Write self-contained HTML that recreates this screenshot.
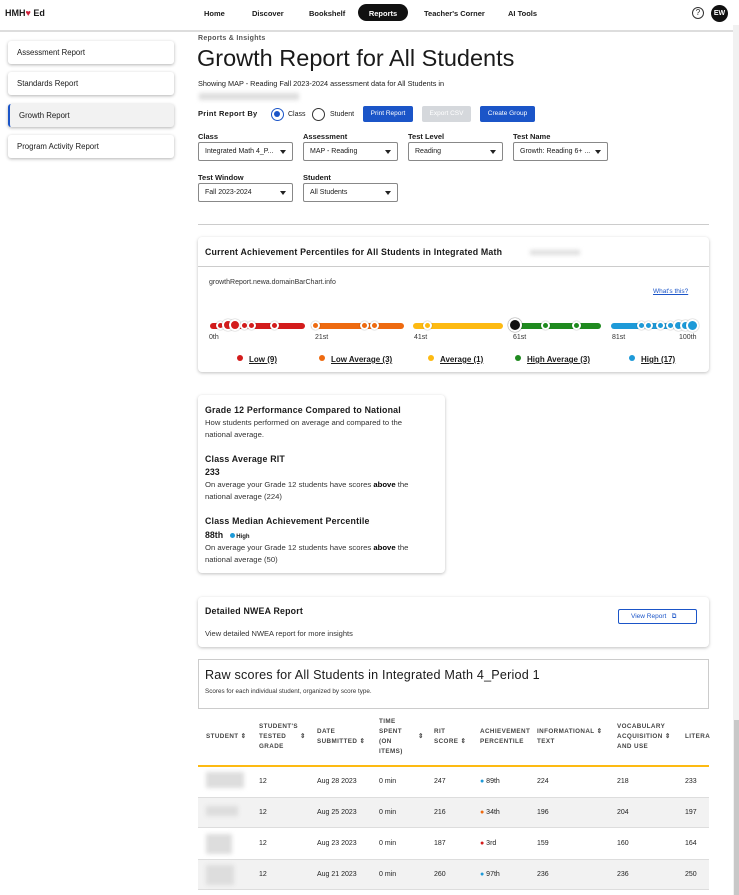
<!DOCTYPE html>
<html><head><meta charset="utf-8"><style>
*{box-sizing:border-box;margin:0;padding:0}
body{width:739px;height:895px;overflow:hidden;background:#fff;font-family:"Liberation Sans",sans-serif;color:#1a1a1a;position:relative}
.a{position:absolute;white-space:nowrap}
.nav{font-size:7.5px;font-weight:bold}
.card{position:absolute;background:#fff;border-radius:4px;box-shadow:0 1px 3px rgba(0,0,0,.25)}
.side{position:absolute;left:8px;width:166px;height:23px;background:#fff;border-radius:3px;box-shadow:0 1px 3px rgba(0,0,0,.3);font-size:7.8px;padding:7px 0 0 9px}
.lbl{font-size:7.5px;font-weight:bold}
.sel{position:absolute;height:19px;width:95px;border:1px solid #888;border-radius:2px;font-size:7px;padding:5px 0 0 6px;background:#fff}
.sel:after{content:"";position:absolute;right:6px;top:7px;border:3.5px solid transparent;border-top:4px solid #222}
.btn{position:absolute;top:106px;height:16px;font-size:6.5px;color:#fff;background:#1b55c8;border-radius:2px;text-align:center;padding-top:4px}
.bar{position:absolute;top:323px;height:6px;border-radius:3px}
.dot{position:absolute;width:9px;height:9px;border-radius:50%;border:2px solid #fff;box-shadow:0 0 1px rgba(0,0,0,.5)}
.tick{position:absolute;top:334px;font-size:7px;color:#333}
.leg{position:absolute;top:355px;font-size:8px;font-weight:bold;text-decoration:underline}
.leg i{display:inline-block;width:6px;height:6px;border-radius:50%;margin-right:6px;vertical-align:1px}
.th{position:absolute;font-size:6.3px;font-weight:bold;letter-spacing:.4px;color:#444;line-height:10px}
.td{position:absolute;font-size:7px;color:#222}
.blur{position:absolute;background:#ddd;filter:blur(2px)}
.pt{font-size:7.7px;line-height:12px;color:#333}
</style></head><body>
<div class="a" style="left:5px;top:8px;font-size:9px;font-weight:bold">HMH<span style="color:#d0203a">♥</span> Ed</div>
<div class="a nav" style="left:204px;top:9px">Home</div>
<div class="a nav" style="left:252px;top:9px">Discover</div>
<div class="a nav" style="left:309px;top:9px">Bookshelf</div>
<div class="a nav" style="left:358px;top:4px;width:50px;height:17px;background:#111;color:#fff;border-radius:9px;text-align:center;padding-top:5px">Reports</div>
<div class="a nav" style="left:424px;top:9px">Teacher's Corner</div>
<div class="a nav" style="left:508px;top:9px">AI Tools</div>
<div class="a" style="left:692px;top:7px;width:12px;height:12px;border:1px solid #333;border-radius:50%;font-size:8px;text-align:center;line-height:10px">?</div>
<div class="a" style="left:711px;top:5px;width:17px;height:17px;background:#111;color:#fff;border-radius:50%;font-size:7px;font-weight:bold;text-align:center;line-height:17px">EW</div>
<div class="a" style="left:0;top:30px;width:733px;height:2px;background:#ddd"></div>
<div class="a" style="left:733px;top:25px;width:6px;height:870px;background:#f1f1f1"></div>
<div class="a" style="left:734px;top:720px;width:5px;height:175px;background:#c8c8c8"></div>

<div class="side" style="top:41px">Assessment Report</div>
<div class="side" style="top:72px">Standards Report</div>
<div class="side" style="top:104px;background:#f2f2f2;border-left:2px solid #1b55c8">Growth Report</div>
<div class="side" style="top:135px">Program Activity Report</div>

<div class="a" style="left:198px;top:35px;font-size:7px;font-weight:bold;color:#555;letter-spacing:.3px">Reports &amp; Insights</div>
<div class="a" style="left:197px;top:45px;font-size:23.5px">Growth Report for All Students</div>
<div class="a" style="left:198px;top:79px;font-size:7.3px">Showing MAP - Reading Fall 2023-2024 assessment data for All Students in</div>
<div class="blur" style="left:199px;top:93px;width:100px;height:7px"></div>
<div class="a lbl" style="left:198px;top:109px;letter-spacing:.3px">Print Report By</div>
<div class="a" style="left:271px;top:108px;width:13px;height:13px;border:1.5px solid #1b55c8;border-radius:50%"><div style="margin:2px;width:6px;height:6px;border-radius:50%;background:#1b55c8"></div></div>
<div class="a" style="left:288px;top:111px;font-size:7px">Class</div>
<div class="a" style="left:312px;top:108px;width:13px;height:13px;border:1.5px solid #333;border-radius:50%"></div>
<div class="a" style="left:330px;top:111px;font-size:7px">Student</div>
<div class="btn" style="left:363px;width:50px">Print Report</div>
<div class="btn" style="left:422px;width:49px;background:#d5d8dc">Export CSV</div>
<div class="btn" style="left:480px;width:55px">Create Group</div>

<div class="a lbl" style="left:198px;top:132px">Class</div>
<div class="a lbl" style="left:303px;top:132px">Assessment</div>
<div class="a lbl" style="left:408px;top:132px">Test Level</div>
<div class="a lbl" style="left:513px;top:132px">Test Name</div>
<div class="sel" style="left:198px;top:142px">Integrated Math 4_P...</div>
<div class="sel" style="left:303px;top:142px">MAP - Reading</div>
<div class="sel" style="left:408px;top:142px">Reading</div>
<div class="sel" style="left:513px;top:142px">Growth: Reading 6+ ...</div>
<div class="a lbl" style="left:198px;top:173px">Test Window</div>
<div class="a lbl" style="left:303px;top:173px">Student</div>
<div class="sel" style="left:198px;top:183px">Fall 2023-2024</div>
<div class="sel" style="left:303px;top:183px">All Students</div>
<div class="a" style="left:198px;top:224px;width:511px;height:1px;background:#ccc"></div>

<div class="card" style="left:198px;top:237px;width:511px;height:135px"></div>
<div class="a" style="left:198px;top:266px;width:511px;height:1px;background:#ccc"></div>
<div class="a" style="left:205px;top:247px;font-size:8.8px;font-weight:bold;letter-spacing:.2px">Current Achievement Percentiles for All Students in Integrated Math</div>
<div class="blur" style="left:530px;top:250px;width:50px;height:5px"></div>
<div class="a" style="left:209px;top:279px;font-size:7px;color:#333">growthReport.newa.domainBarChart.info</div>
<div class="a" style="left:653px;top:288px;font-size:6.5px;color:#1b55c8;text-decoration:underline">What's this?</div>
<div class="bar" style="left:210px;width:95px;background:#d31c1c"></div>
<div class="bar" style="left:311px;width:93px;background:#ee6a10"></div>
<div class="bar" style="left:413px;width:90px;background:#fdba12"></div>
<div class="bar" style="left:513px;width:88px;background:#1f8a1f"></div>
<div class="bar" style="left:611px;width:86px;background:#1e9ad8"></div>
<div class="dot" style="left:216px;top:321px;background:#d31c1c"></div>
<div class="dot" style="left:222px;top:319px;width:12px;height:12px;background:#d31c1c"></div>
<div class="dot" style="left:229px;top:319px;width:12px;height:12px;background:#d31c1c"></div>
<div class="dot" style="left:240px;top:321px;background:#d31c1c"></div>
<div class="dot" style="left:247px;top:321px;background:#d31c1c"></div>
<div class="dot" style="left:270px;top:321px;background:#d31c1c"></div>
<div class="dot" style="left:311px;top:321px;background:#ee6a10"></div>
<div class="dot" style="left:360px;top:321px;background:#ee6a10"></div>
<div class="dot" style="left:370px;top:321px;background:#ee6a10"></div>
<div class="dot" style="left:423px;top:321px;background:#fdba12"></div>
<div class="a" style="left:508px;top:318px;width:14px;height:14px;border-radius:50%;background:#111;border:2px solid #fff;box-shadow:0 0 1px #000"></div>
<div class="dot" style="left:541px;top:321px;background:#1f8a1f"></div>
<div class="dot" style="left:572px;top:321px;background:#1f8a1f"></div>
<div class="dot" style="left:637px;top:321px;background:#1e9ad8"></div>
<div class="dot" style="left:644px;top:321px;background:#1e9ad8"></div>
<div class="dot" style="left:656px;top:321px;background:#1e9ad8"></div>
<div class="dot" style="left:666px;top:321px;background:#1e9ad8"></div>
<div class="dot" style="left:673px;top:320px;width:11px;height:11px;background:#1e9ad8"></div>
<div class="dot" style="left:680px;top:320px;width:11px;height:11px;background:#1e9ad8"></div>
<div class="dot" style="left:686px;top:319px;width:13px;height:13px;background:#1e9ad8"></div>
<div class="tick" style="left:209px">0th</div>
<div class="tick" style="left:315px">21st</div>
<div class="tick" style="left:414px">41st</div>
<div class="tick" style="left:513px">61st</div>
<div class="tick" style="left:612px">81st</div>
<div class="tick" style="left:679px">100th</div>
<div class="leg" style="left:237px"><i style="background:#d31c1c"></i>Low (9)</div>
<div class="leg" style="left:319px"><i style="background:#ee6a10"></i>Low Average (3)</div>
<div class="leg" style="left:428px"><i style="background:#fdba12"></i>Average (1)</div>
<div class="leg" style="left:515px"><i style="background:#1f8a1f"></i>High Average (3)</div>
<div class="leg" style="left:629px"><i style="background:#1e9ad8"></i>High (17)</div>

<div class="card" style="left:198px;top:395px;width:247px;height:178px"></div>
<div class="a" style="left:205px;top:405px;font-size:8.8px;font-weight:bold;letter-spacing:.2px">Grade 12 Performance Compared to National</div>
<div class="a pt" style="left:205px;top:417px">How students performed on average and compared to the<br>national average.</div>
<div class="a" style="left:205px;top:454px;font-size:8.8px;font-weight:bold;letter-spacing:.2px">Class Average RIT</div>
<div class="a" style="left:205px;top:467px;font-size:8.8px;font-weight:bold">233</div>
<div class="a pt" style="left:205px;top:479px">On average your Grade 12 students have scores <b style="color:#000">above</b> the<br>national average (224)</div>
<div class="a" style="left:205px;top:516px;font-size:8.8px;font-weight:bold;letter-spacing:.2px">Class Median Achievement Percentile</div>
<div class="a" style="left:205px;top:530px;font-size:8.8px;font-weight:bold">88th <span style="font-size:6px;margin-left:4px"><i style="display:inline-block;width:5px;height:5px;border-radius:50%;background:#1e9ad8"></i> High</span></div>
<div class="a pt" style="left:205px;top:542px">On average your Grade 12 students have scores <b style="color:#000">above</b> the<br>national average (50)</div>

<div class="card" style="left:198px;top:597px;width:511px;height:50px"></div>
<div class="a" style="left:205px;top:606px;font-size:8.8px;font-weight:bold;letter-spacing:.2px">Detailed NWEA Report</div>
<div class="a" style="left:205px;top:629px;font-size:7.5px;color:#333">View detailed NWEA report for more insights</div>
<div class="a" style="left:618px;top:609px;width:79px;height:15px;border:1px solid #1b55c8;border-radius:2px;font-size:6.5px;color:#1b55c8;padding:3px 0 0 12px">View Report &nbsp;&nbsp;⧉</div>

<div class="a" style="left:198px;top:659px;width:511px;height:50px;border:1px solid #ccc;background:#fff"></div>
<div class="a" style="left:205px;top:668px;font-size:12.6px;letter-spacing:.2px">Raw scores for All Students in Integrated Math 4_Period 1</div>
<div class="a" style="left:205px;top:688px;font-size:6.3px;color:#333">Scores for each individual student, organized by score type.</div>
<div class="th" style="left:206px;top:732px">STUDENT ⇕</div>
<div class="th" style="left:259px;top:722px">STUDENT'S<br>TESTED<br>GRADE</div><div class="th" style="left:300px;top:732px">⇕</div>
<div class="th" style="left:317px;top:727px">DATE<br>SUBMITTED ⇕</div>
<div class="th" style="left:379px;top:717px">TIME<br>SPENT<br>(ON<br>ITEMS)</div><div class="th" style="left:418px;top:732px">⇕</div>
<div class="th" style="left:434px;top:727px">RIT<br>SCORE ⇕</div>
<div class="th" style="left:480px;top:727px">ACHIEVEMENT<br>PERCENTILE</div>
<div class="th" style="left:537px;top:727px">INFORMATIONAL ⇕<br>TEXT</div>
<div class="th" style="left:617px;top:722px">VOCABULARY<br>ACQUISITION ⇕<br>AND USE</div>
<div class="th" style="left:685px;top:732px">LITERA</div>
<div class="a" style="left:198px;top:765px;width:511px;height:2px;background:#fdba12"></div>
<div class="a" style="left:198px;top:797px;width:511px;height:31px;background:#f2f2f2;border-top:1px solid #ddd;border-bottom:1px solid #ddd"></div>
<div class="a" style="left:198px;top:859px;width:511px;height:31px;background:#f2f2f2;border-top:1px solid #ddd;border-bottom:1px solid #ddd"></div>
<div class="blur" style="left:206px;top:772px;width:38px;height:16px"></div>
<div class="blur" style="left:206px;top:806px;width:32px;height:10px"></div>
<div class="blur" style="left:206px;top:834px;width:26px;height:20px"></div>
<div class="blur" style="left:206px;top:865px;width:28px;height:20px"></div>
<div class="td" style="left:259px;top:778px">12</div><div class="td" style="left:317px;top:778px">Aug 28 2023</div><div class="td" style="left:379px;top:778px">0 min</div><div class="td" style="left:434px;top:778px">247</div><div class="td" style="left:480px;top:778px"><span style="color:#1e9ad8">●</span> 89th</div><div class="td" style="left:537px;top:778px">224</div><div class="td" style="left:617px;top:778px">218</div><div class="td" style="left:685px;top:778px">233</div>
<div class="td" style="left:259px;top:809px">12</div><div class="td" style="left:317px;top:809px">Aug 25 2023</div><div class="td" style="left:379px;top:809px">0 min</div><div class="td" style="left:434px;top:809px">216</div><div class="td" style="left:480px;top:809px"><span style="color:#ee6a10">●</span> 34th</div><div class="td" style="left:537px;top:809px">196</div><div class="td" style="left:617px;top:809px">204</div><div class="td" style="left:685px;top:809px">197</div>
<div class="td" style="left:259px;top:840px">12</div><div class="td" style="left:317px;top:840px">Aug 23 2023</div><div class="td" style="left:379px;top:840px">0 min</div><div class="td" style="left:434px;top:840px">187</div><div class="td" style="left:480px;top:840px"><span style="color:#d31c1c">●</span> 3rd</div><div class="td" style="left:537px;top:840px">159</div><div class="td" style="left:617px;top:840px">160</div><div class="td" style="left:685px;top:840px">164</div>
<div class="td" style="left:259px;top:871px">12</div><div class="td" style="left:317px;top:871px">Aug 21 2023</div><div class="td" style="left:379px;top:871px">0 min</div><div class="td" style="left:434px;top:871px">260</div><div class="td" style="left:480px;top:871px"><span style="color:#1e9ad8">●</span> 97th</div><div class="td" style="left:537px;top:871px">236</div><div class="td" style="left:617px;top:871px">236</div><div class="td" style="left:685px;top:871px">250</div>
</body></html>
